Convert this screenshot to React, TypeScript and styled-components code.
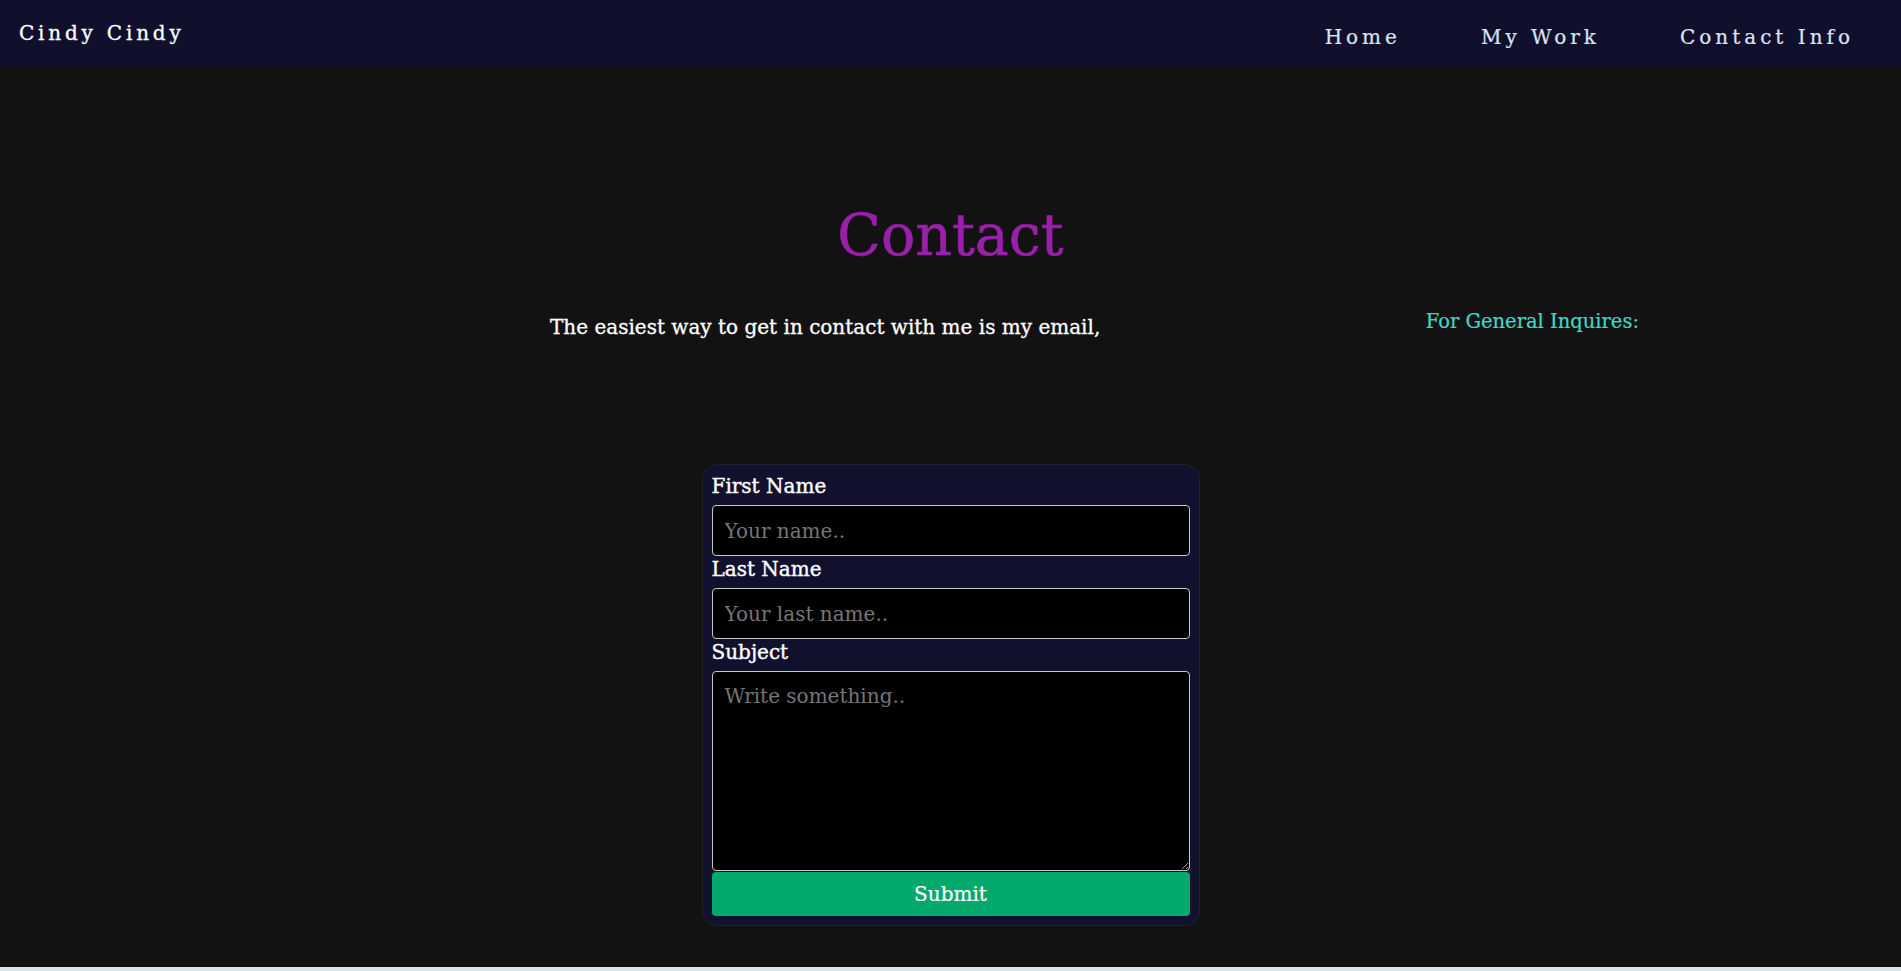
import React from "react";
import styled, { createGlobalStyle } from "styled-components";

const GlobalStyle = createGlobalStyle`
  html, body {
    margin: 0;
    padding: 0;
    background: #d8e6ec;
  }
  body {
    font-family: "DejaVu Serif", "Liberation Serif", serif;
    -webkit-font-smoothing: antialiased;
  }
  * { box-sizing: border-box; }
`;

const Page = styled.div`
  height: 967px;
  background: #121212;
  display: flex;
  flex-direction: column;
`;

const Header = styled.header`
  height: 67px;
  background: #10102c;
  display: flex;
  align-items: center;
  justify-content: space-between;
  padding: 0 47px 0 19px;
  flex-shrink: 0;
`;

const Logo = styled.div`
  color: #ffffff;
  font-size: 20px;
  letter-spacing: 3.8px;
  margin-top: -1px;
  -webkit-text-stroke: 0.3px currentColor;
`;

const Nav = styled.nav`
  display: flex;
  gap: 80px;
  margin-top: 7px;
`;

const NavLink = styled.a`
  color: #dde3f5;
  font-size: 20px;
  letter-spacing: 4px;
  text-decoration: none;
  -webkit-text-stroke: 0.2px currentColor;
`;

const Main = styled.main`
  display: flex;
  flex-direction: column;
  align-items: center;
`;

const Title = styled.h1`
  margin: 133px 0 0;
  font-size: 57px;
  line-height: 70px;
  font-weight: normal;
  color: #9a1fab;
  -webkit-text-stroke: 0.6px currentColor;
`;

const IntroRow = styled.div`
  align-self: stretch;
  display: flex;
  align-items: flex-start;
  padding-left: 550px;
`;

const Intro = styled.p`
  margin: 44px 0 0;
  font-size: 20px;
  line-height: 26px;
  color: #ffffff;
  -webkit-text-stroke: 0.3px currentColor;
`;

const Inquiries = styled.p`
  margin: 39px 262px 0 auto;
  font-size: 19.5px;
  line-height: 26px;
  color: #3ed9c4;
  -webkit-text-stroke: 0.2px currentColor;
`;

const Card = styled.form`
  margin-top: 124px;
  width: 498px;
  padding: 8px 9px 9px;
  background: #11112d;
  border: 1px solid #22222e;
  border-radius: 16px;
`;

const Label = styled.label`
  display: block;
  color: #ffffff;
  font-size: 20px;
  line-height: 26px;
  -webkit-text-stroke: 0.4px currentColor;
`;

const Input = styled.input`
  display: block;
  width: 100%;
  height: 51px;
  margin-top: 6px;
  padding: 0 12px;
  background: #000000;
  color: #ffffff;
  border: 1px solid #c8c8c8;
  border-radius: 4px;
  font-family: inherit;
  font-size: 20px;
  &::placeholder { color: #767676; }
`;

const TextArea = styled.textarea`
  display: block;
  width: 100%;
  height: 200px;
  margin-top: 6px;
  padding: 12px;
  background: #000000;
  color: #ffffff;
  border: 1px solid #c8c8c8;
  border-radius: 4px;
  font-family: inherit;
  font-size: 20px;
  &::placeholder { color: #767676; }
`;

const Submit = styled.button`
  display: block;
  width: 100%;
  height: 44px;
  margin-top: 1px;
  background: #04aa6d;
  color: #ffffff;
  border: none;
  border-radius: 4px;
  font-family: inherit;
  font-size: 20px;
  cursor: pointer;
  -webkit-text-stroke: 0.2px currentColor;
`;

export default function App() {
  return (
    <>
      <GlobalStyle />
      <Page>
        <Header>
          <Logo>Cindy Cindy</Logo>
          <Nav>
            <NavLink href="#">Home</NavLink>
            <NavLink href="#">My Work</NavLink>
            <NavLink href="#">Contact Info</NavLink>
          </Nav>
        </Header>
        <Main>
          <Title>Contact</Title>
          <IntroRow>
            <Intro>The easiest way to get in contact with me is my email,</Intro>
            <Inquiries>For General Inquires:</Inquiries>
          </IntroRow>
          <Card onSubmit={(e) => e.preventDefault()}>
            <Label htmlFor="fname">First Name</Label>
            <Input id="fname" type="text" placeholder="Your name.." />
            <Label htmlFor="lname">Last Name</Label>
            <Input id="lname" type="text" placeholder="Your last name.." />
            <Label htmlFor="subject">Subject</Label>
            <TextArea id="subject" placeholder="Write something.." />
            <Submit type="submit">Submit</Submit>
          </Card>
        </Main>
      </Page>
    </>
  );
}
